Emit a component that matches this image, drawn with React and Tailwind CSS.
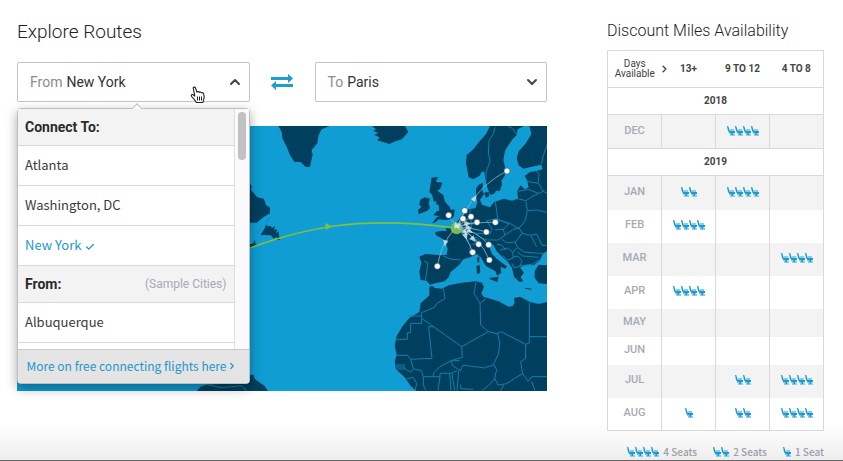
import { useState } from 'react';
import { Check, ChevronDown, ChevronRight, ChevronUp } from 'lucide-react';

const DESTINATIONS = ['Atlanta', 'Washington, DC', 'New York'];
const SAMPLE_CITIES = ['Albuquerque'];

// seats: [13+, 9 to 12, 4 to 8]
const YEARS = [
  { year: '2018', months: [{ name: 'DEC', seats: [0, 4, 0] }] },
  {
    year: '2019',
    months: [
      { name: 'JAN', seats: [2, 4, 0] },
      { name: 'FEB', seats: [4, 0, 0] },
      { name: 'MAR', seats: [0, 0, 4] },
      { name: 'APR', seats: [4, 0, 0] },
      { name: 'MAY', seats: [0, 0, 0] },
      { name: 'JUN', seats: [0, 0, 0] },
      { name: 'JUL', seats: [0, 2, 4] },
      { name: 'AUG', seats: [1, 2, 4] },
    ],
  },
];

const AIRPORTS = [
  [381, 153], [254, 272], [206, 286], [249, 296], [273, 290], [291, 307], [346, 307],
  [319, 336], [296, 373], [326, 374], [278, 397], [328, 420], [172, 439],
];

// x, y, heading in degrees (0 = right)
const ARROWS = [
  [284, 234, -55], [196, 370, 100], [262, 310, 0], [266, 322, 10], [256, 338, 50],
  [257, 350, 70], [280, 358, 50], [270, 334, 30], [236, 316, -50], [228, 314, -100],
];

function Seats({ count }) {
  return (
    <span className="inline-flex" role="img" aria-label={`${count} seats`}>
      {Array.from({ length: count }, (_, i) => (
        <svg key={i} viewBox="0 0 8 12" className="h-3 w-2">
          <path d="M3 4h4v2H3zM2 8h5v1H2zM3 9h5v2H3z" fill="#8ccbe6" />
          <path d="M0 1h1.200L2.800 6H8v2H2.500L1 6z" fill="#1b9ad0" />
          <path d="M4.500 8h1.500v2H4.500z" fill="#1b9ad0" />
        </svg>
      ))}
    </span>
  );
}

function RouteMap() {
  return (
    <svg viewBox="0 0 1590 795" className="block w-full" role="img" aria-label="Routes from New York to Paris">
      <rect width="1590" height="795" fill="#0f9dd3" />

      {/* North Atlantic */}
      <g transform="translate(669 -48)" fill="#003f5e">
        <path d="M115 48l10 17 2 20 13 25 10 25 13 21h19l15 15h13l4-20 4-16-3-15 17-20 4-25 9-17 23-10z" />
        <path d="M396 48l12 10-8 4 15 8-13 4 16 8-6 10 10 2 26 8 18-8 20-6 19-22-10-18z" />
        <path d="M0 200l28 18 7 10-2 12 19 22 20 4 6 19 12 8v17l-20 12-20 16H0z" />
        <path d="M92 318l-14 22 2 8 12 0 4 6 10-6-4 12 10-2-4 12 8-6 3 26-8 0-2-10-8 6-8-10-31-1 14-24 4-16z" />
        <path d="M0 405l38-4 7-12 1 12 6 2-22 11z" />
      </g>
      <path d="M540 795l10-13 20-6 80-4 46-14-4-12 17 0 4 12 16 12 14 10 10 15z" fill="#003f5e" />
      <path d="M574 777l40 8 60-6 14 16" fill="none" stroke="#0f86b4" strokeWidth="3" />

      {/* Europe */}
      <g transform="translate(1089 -18)">
        <g fill="#003f5e">
          <path d="M330 18L318 42 300 62 280 88 260 105 258 130 263 155 266 172 280 178 298 168 306 155 313 155 316 180 324 208 330 224 342 222 348 212 360 212 366 192 364 182 374 168 375 140 370 120 375 92 384 78 396 60 410 45 413 28 432 18z" />
          <path d="M155 173l20-2-8 14 20 3-6 18-9 6 18 13 5 20 15 17 2 8 12-2-2 20-8 10-24 2-14-2-8 8-12 4 14-18 10-4-20-2 10-12 8-2-2-16-8-4 2-10-8 4-6-22-8-8z" />
          <path d="M120 240l14-8 16 4-4 12 4 16-8 8-26 11-2-13 10-10-6-6z" />
          <path d="M312 218l14-2 2 12-10 6zM292 18l8-8z" />
          <path d="M165 337L185 332 200 334 196 320 206 324 218 322 226 310 240 296 252 280 265 268 286 265 292 248 288 226 288 206 296 194 309 188 307 212 312 222 300 240 306 254 330 262 342 246 372 236 396 242 414 236 412 212 422 196 434 208 446 202 442 182 434 168 450 156 472 152 488 148 484 134 456 140 430 146 416 136 410 114 416 94 436 72 454 42 448 18 502 18 502 392 488 402 480 420 462 436 442 434 420 442 432 458 422 472 430 484 418 486 402 470 396 444 382 424 366 410 350 394 340 374 326 372 330 386 336 402 352 418 382 440 374 446 362 440 364 458 352 468 346 454 318 438 302 412 290 402 270 412 250 418 238 434 212 456 206 472 194 484 165 490 150 495 140 482 122 480 118 456 124 428 118 410 136 402 186 406 200 404 203 386 194 360 168 346z" />
          <path d="M328 474l28-4-4 16-22-8zM289 438l10-4 2 24-10 4zM291 414l7-6v18l-6 2zM435 503l20 3-1 3-19-3zM464 452l12-18 26 2v56l-26-2-12-16z" />
        </g>
        <g fill="none" stroke="#117fae" strokeWidth="3" strokeLinejoin="round">
          <path d="M345 22l-4 18-14 22-2 40 6 20-13 34v28M384 18l14 8 12 18M502 72l-12 34-6 26" />
          <path d="M440 184l34 6 4-28-10-8M414 214l30-6 32 12 14-6-14-24M412 236l26 6 18-12 20-10" />
          <path d="M490 214l12 6M438 246l4 26-6 30-20 24-26-16-36-10-4-26-4-30M442 272l30-2 30 8" />
          <path d="M272 264l-4 26 8 22-6 22 20 6 40 2 6-14-16-26 30-6 36 16-16 16-26 2" />
          <path d="M370 326l4 20-20 14-34 0-20-8-10-12M374 346l26-18 18-4 8 16-20 26-26 2-14-10" />
          <path d="M426 340l26 6 18-4 16 34 16 0M452 346l18 34M406 366l6 16 20 14 46 4 12 0" />
          <path d="M224 314l14 12 24 14-2 22 12 14-4 24 12 8M260 362l28-10 12 10-22 12M240 326l30 8" />
          <path d="M190 408l26 10 26 2M132 424l12 4-4 30-4 24" />
          <path d="M350 372l16 4 12 14M360 390l22-6 16 12 2 18-18 6-16-14M400 396l10-12M398 412l16-4 12 14-6 16-18 6-6-14M420 438l40-6 18-14M412 396l16 12 48 4" />
        </g>
      </g>

      {/* Africa */}
      <g transform="translate(1089 372)">
        <path d="M148 110l10-2 6 6 22 2 20-10 34-7 46-5 20 4 6 14-8 18 6 10 46 14 30 16 12-2 6-10-2-14 18-4 30 16 26 6 26-6v270H112l-20-18-18-26-26-24-4-24 6-20-6-26 6-30 18-30 20-24 30-18 4-26 26-24z" fill="#003f5e" />
        <g fill="none" stroke="#117fae" strokeWidth="3" strokeLinejoin="round">
          <path d="M190 116l5 30-24 14-8 12-38 16v17l120 85 80-45-23-20-2-65-18-30 6-33M300 160l18-14" />
          <path d="M125 198H84M125 206v14H92v28H82v20H46M160 230h-14l10 95-64 3-10-12-34 0" />
          <path d="M245 290l2 32-34 10-33 18-20 20 0 8M325 245l26 6 12-6 74 38 11-4V158M448 260h54" />
          <path d="M352 250l8 30-5 32-16 34-10 2-16 6-26-4-38-4-8 16-24-16-4-14 26 0M437 283v42l-15 10 6 36-24 14-24 16-26 4-10-20 6-26-8-14" />
          <path d="M428 370l16 24 12-14 46 0M92 328l8 28 24 6 6 18h50v-10h32l20-8M130 380v26l8 16M180 380l-6 42M209 370l4 52M216 370l8 52M236 362l-5 60M242 404l0 12 38 2M345 385l-20 22-20 16" />
          <path d="M48 345h26M48 351h26v6H50M75 356l16 10 10-8M80 386l20-4 10 18-4 20M455 394l10 28M372 404l-10 18" />
        </g>
      </g>

      {/* Transatlantic leg */}
      <path d="M690 369C850 310 1020 265 1319 307" fill="none" stroke="#7dc142" strokeWidth="5" />
      <path d="M924 291l21 10-18 11z" fill="#7dc142" />

      {/* Connections out of Paris */}
      <g transform="translate(1089 -18)">
        <circle cx="230" cy="325" r="18" fill="#71c043" />
        <g fill="none" stroke="#8fb4c7" strokeWidth="2.5">
          <path d="M230 322C270 240 310 190 381 153M230 322C190 360 180 400 172 439M230 322L254 272M230 322L206 286M230 322L249 296M230 322L273 290" />
          <path d="M230 322Q260 308 291 307M230 322Q280 305 346 307M230 322Q270 322 319 336M230 322Q270 336 296 373M230 322Q290 332 326 374M230 322Q262 350 278 397M230 322Q300 350 328 420" />
        </g>
        {ARROWS.map(([x, y, angle]) => (
          <path
            key={`${x}-${y}`}
            d="M-9 -8L10 0L-9 8Z"
            transform={`translate(${x} ${y}) rotate(${angle})`}
            fill="#d5e6ee"
            fillOpacity="0.85"
          />
        ))}
        {AIRPORTS.map(([x, y]) => (
          <circle key={`${x}-${y}`} cx={x} cy={y} r="9" fill="#fff" stroke="#1f3f66" strokeWidth="1.5" />
        ))}
      </g>
    </svg>
  );
}

function HandCursor() {
  return (
    <svg viewBox="0 0 16 18" className="pointer-events-none absolute right-11 -bottom-0.5 h-[18px] w-4" aria-hidden="true">
      <path
        d="M3.2 2.2C3 1 5 .6 5.5 2l1.4 4.2c.3-1 2-1 2.3.2.5-.8 2-.6 2.2.5.8-.6 2 0 2.2 1l.6 3-.6 3-.6 2.6H6.400L5 14.400 1.600 10.500C.6 9 2.200 8 3.400 9l1.400 1.200z"
        fill="#fff"
        stroke="#222"
        strokeWidth="1.1"
        strokeLinejoin="round"
      />
      <path d="M7.500 10.500v4M9.500 10.500v4M11.500 10.500v4" stroke="#222" strokeWidth="1" />
    </svg>
  );
}

function CityOption({ name, selected, onSelect }) {
  return (
    <li role="option" aria-selected={selected}>
      <button
        type="button"
        onClick={() => onSelect(name)}
        className={`flex h-10 w-full items-center gap-1 border-b border-[#d9d9d9] px-[7px] pb-0.5 text-left ${selected ? 'text-[#1f97cc]' : 'text-[#3b3b3b]'}`}
      >
        {name}
        {selected && <Check size={10} strokeWidth={3} className="mt-1" />}
      </button>
    </li>
  );
}

function CityMenu({ city, onSelect }) {
  return (
    <div className="absolute inset-x-0 top-full z-10 mt-1.5 rounded-sm border border-[#bdbdbd] bg-white shadow-[0_4px_12px_rgba(0,0,0,0.35)]">
      <span className="absolute -top-1 left-1/2 size-2 rotate-45 border-t border-l border-[#bdbdbd] bg-white" />
      <div className="relative flex h-60 overflow-hidden font-['Noto_Sans_CJK_SC',sans-serif] text-[13px]">
        <ul role="listbox" aria-label="From city" className="flex-1">
          <li className="flex h-[37px] items-center border-b border-[#d9d9d9] bg-[#f3f3f3] px-[7px] font-[Roboto,sans-serif] text-sm font-bold text-[#2b2b2b]">
            Connect To:
          </li>
          {DESTINATIONS.map(name => (
            <CityOption key={name} name={name} selected={name === city} onSelect={onSelect} />
          ))}
          <li className="flex h-[37px] items-center justify-between border-b border-[#d9d9d9] bg-[#f3f3f3] px-[7px] font-[Roboto,sans-serif] text-sm font-bold text-[#2b2b2b]">
            From:
            <span className="text-xs font-normal text-[#a3abb3]">(Sample Cities)</span>
          </li>
          {SAMPLE_CITIES.map(name => (
            <CityOption key={name} name={name} selected={name === city} onSelect={onSelect} />
          ))}
        </ul>
        <div className="w-[15px] border-l border-[#dedede] bg-[#fafafa] px-[3px] py-[3px]">
          <div className="h-12 rounded-full bg-[#c1c1c1]" />
        </div>
      </div>
      <a
        href="#connecting-flights"
        className="flex h-[34px] items-center justify-end border-t border-[#c9c9c9] bg-[#e4e4e4] pr-3 pb-0.5 font-['Noto_Sans_CJK_SC',sans-serif] text-xs whitespace-nowrap text-[#1f97cc]"
      >
        More on free connecting flights here
        <ChevronRight size={10} strokeWidth={3} />
      </a>
    </div>
  );
}

function ExploreRoutes() {
  const [from, setFrom] = useState('New York');
  const [open, setOpen] = useState(true);

  const handleSelect = name => {
    setFrom(name);
    setOpen(false);
  };

  return (
    <section>
      <h1 className="mt-5 text-[19px] leading-6 font-light text-[#222]">Explore Routes</h1>
      <div className="mt-[18px] flex">
        <div className="relative flex-1">
          <button
            type="button"
            aria-expanded={open}
            onClick={() => setOpen(!open)}
            className="flex h-10 w-full items-center rounded-xs border border-[#c4c4c4] bg-white pr-1.5 pl-3 text-sm"
          >
            <span className="text-[#8b8b8b]">From</span>
            <span className="ml-1 flex-1 text-left text-[#333]">{from}</span>
            <ChevronUp size={16} strokeWidth={3} className="text-[#444]" />
          </button>
          <HandCursor />
          {open && <CityMenu city={from} onSelect={handleSelect} />}
        </div>
        <button type="button" aria-label="Swap cities" className="flex w-[65px] items-center justify-center">
          <svg viewBox="0 0 22 16" className="h-4 w-[22px]" fill="#1f9dd2">
            <path d="M0 3h17V0l5 4.500-5 4.500V6H0zM22 13H5v3L0 11.500 5 7v3h17z" />
          </svg>
        </button>
        <div className="flex-1">
          <div className="flex h-10 items-center rounded-xs border border-[#c4c4c4] bg-white pr-1.5 pl-3 text-sm">
            <label htmlFor="to-city" className="text-[#8b8b8b]">To</label>
            <select id="to-city" defaultValue="Paris" className="ml-1 flex-1 appearance-none bg-transparent text-[#333]">
              <option>Paris</option>
            </select>
            <ChevronDown size={16} strokeWidth={3} className="text-[#444]" />
          </div>
        </div>
      </div>
      <div className="mt-6">
        <RouteMap />
      </div>
    </section>
  );
}

function MilesAvailability() {
  return (
    <section>
      <h2 className="mt-5 text-base leading-[22px] font-light text-[#222]">Discount Miles Availability</h2>
      <table className="mt-2 w-full table-fixed border-collapse border border-[#d9d9d9] text-center">
        <thead>
          <tr className="h-[37px] text-[10px] leading-[10px] text-[#444]">
            <th className="relative p-0 font-normal">
              Days Available
              <ChevronRight size={11} strokeWidth={3} className="absolute top-1/2 -right-2 -translate-y-1/2" />
            </th>
            <th className="p-0 font-bold">13+</th>
            <th className="p-0 font-bold">9 TO 12</th>
            <th className="p-0 font-bold">4 TO 8</th>
          </tr>
        </thead>
        {YEARS.map(({ year, months }) => (
          <tbody key={year}>
            <tr className="h-[27px] border-y border-[#d9d9d9] text-[10px] leading-[10px] text-[#444]">
              <th colSpan={4} className="p-0 font-bold">{year}</th>
            </tr>
            {months.map(({ name, seats }) => (
              <tr
                key={name}
                className={`odd:bg-white even:bg-[#f3f3f3] nth-2:h-[34px] ${seats.some(Boolean) ? 'h-[33px]' : 'h-7'}`}
              >
                <th className="p-0 pb-0.5 text-[11px] leading-4 font-medium text-[#a3abb3]">{name}</th>
                {seats.map((count, i) => (
                  <td key={i} className="border-l border-[#d9d9d9] p-0 leading-none">
                    {count > 0 && <Seats count={count} />}
                  </td>
                ))}
              </tr>
            ))}
          </tbody>
        ))}
      </table>
      <div className="mt-[13px] flex items-center justify-end gap-4 font-['Noto_Sans_CJK_SC',sans-serif] text-[10px] leading-4 font-medium whitespace-nowrap text-[#9aa1a8]">
        <span className="flex items-center gap-1"><Seats count={4} /> 4 Seats</span>
        <span className="flex items-center gap-1"><Seats count={2} /> 2 Seats</span>
        <span className="flex items-center gap-1"><Seats count={1} /> 1 Seat</span>
      </div>
    </section>
  );
}

export default function App() {
  return (
    <main className="grid min-h-screen grid-cols-[530fr_217fr] gap-[60px] border-b border-[#666] bg-white bg-linear-to-t from-[#eeeeee] to-white to-[36px] pr-[19px] pl-[17px] font-[Roboto,sans-serif]">
      <ExploreRoutes />
      <MilesAvailability />
    </main>
  );
}
